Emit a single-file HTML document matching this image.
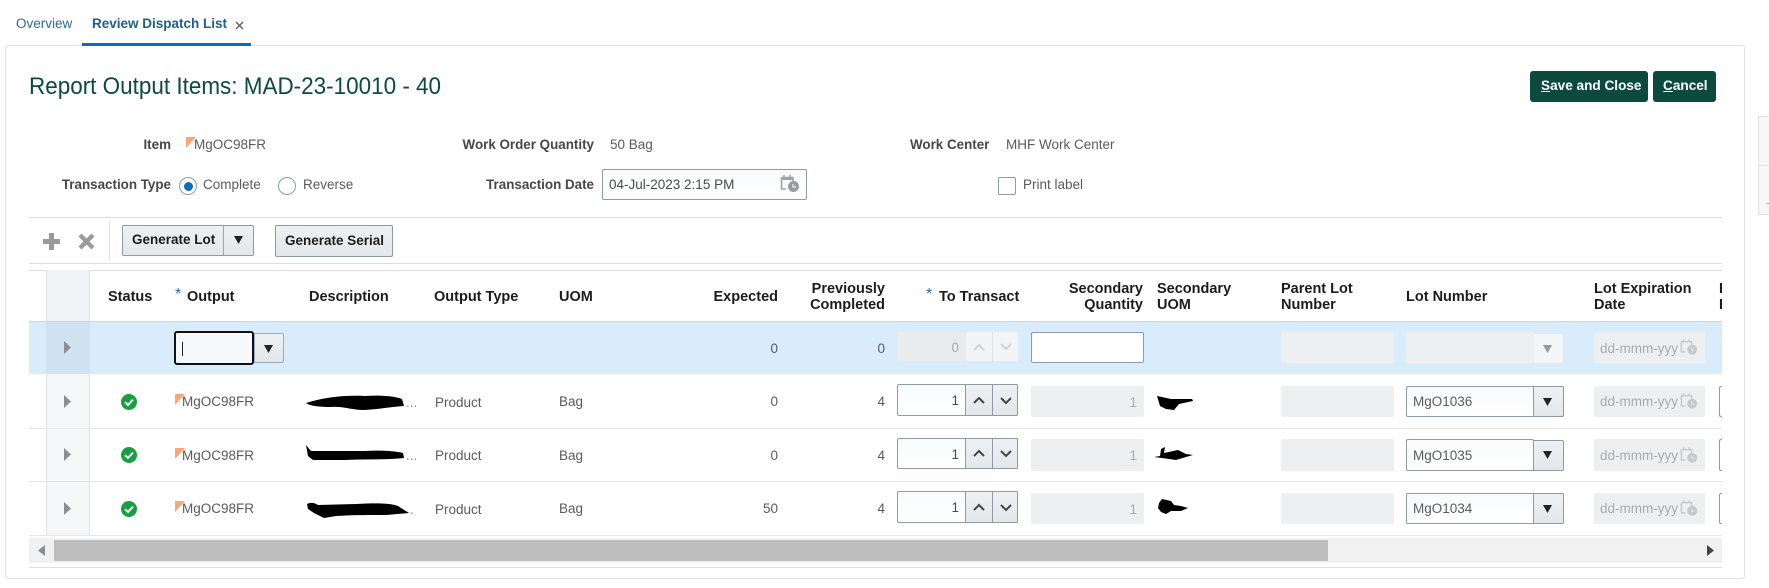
<!DOCTYPE html>
<html>
<head>
<meta charset="utf-8">
<style>
html,body{margin:0;padding:0;background:#fff;}
body{width:1769px;height:588px;overflow:hidden;position:relative;font-family:"Liberation Sans",sans-serif;font-size:13.5px;color:#5a5a5a;}
div,svg,span.a{position:absolute;box-sizing:border-box;}
.t{position:absolute;white-space:nowrap;line-height:16px;height:16px;margin-top:1px;}
.r{text-align:right;}
.b{font-weight:bold;color:#474747;font-size:13.4px;}
.h{font-weight:bold;color:#1c1c1c;font-size:14.5px;margin-top:1px;}
.dis{background:#eeeff0;border-radius:2px;}
.inp{background:linear-gradient(#f8fbfd,#fff);border:1px solid #8f9ba4;border-radius:2px;}
.btn{background:linear-gradient(#eef1f4,#e3e7ea);border:1px solid #8f9ba4;border-radius:2px;}
.g{color:#aaa;}
</style>
</head>
<body>
<!-- tabs -->
<div class="t" style="left:16px;top:15px;color:#2d6a8f;font-size:13.5px;">Overview</div>
<div class="t" style="left:92px;top:15px;color:#1d5f8a;font-weight:bold;font-size:13.5px;">Review Dispatch List</div>
<svg style="left:235px;top:21px" width="9" height="9" viewBox="0 0 9 9"><path d="M1 1L8 8M8 1L1 8" stroke="#666" stroke-width="1.5"/></svg>
<!-- panel -->
<div style="left:5px;top:45px;width:1740px;height:534px;border:1px solid #dfe1e3;border-radius:3px;"></div>
<div style="left:82px;top:43px;width:169px;height:3px;background:#0f6cbd;"></div>
<!-- side tabs -->
<div style="left:1758px;top:116px;width:14px;height:99px;background:#f7f7f7;border:1px solid #e2e2e2;"></div>
<div style="left:1758px;top:165px;width:11px;height:1px;background:#e2e2e2;"></div>
<div style="left:1767px;top:203px;width:2px;height:1px;background:#999;"></div>
<!-- title -->
<div class="t" style="left:29px;top:72px;height:28px;line-height:28px;font-size:24px;color:#0d4a40;transform:scaleX(.936);transform-origin:0 50%;">Report Output Items: MAD-23-10010 - 40</div>
<div style="left:1530px;top:71px;width:118px;height:31px;background:#0c4a3f;border-radius:3px;"></div>
<div class="t" style="left:1541px;top:77px;color:#fff;font-weight:bold;font-size:13.6px;"><u>S</u>ave and Close</div>
<div style="left:1653px;top:71px;width:63px;height:31px;background:#0c4a3f;border-radius:3px;"></div>
<div class="t" style="left:1663px;top:77px;color:#fff;font-weight:bold;font-size:13.6px;"><u>C</u>ancel</div>
<!-- form -->
<div class="t b r" style="left:71px;width:100px;top:136px;">Item</div>
<svg style="left:186px;top:137px" width="10" height="11"><path d="M0 0H10L0 11Z" fill="#f6a878"/></svg>
<div class="t" style="left:194px;top:136px;">MgOC98FR</div>
<div class="t b r" style="left:394px;width:200px;top:136px;">Work Order Quantity</div>
<div class="t" style="left:610px;top:136px;">50 Bag</div>
<div class="t b" style="left:910px;top:136px;">Work Center</div>
<div class="t" style="left:1006px;top:136px;">MHF Work Center</div>
<div class="t b r" style="left:0;width:171px;top:176px;">Transaction Type</div>
<div style="left:179px;top:177px;width:18px;height:18px;border:1px solid #8f9ba4;border-radius:50%;background:#fff;"></div>
<div style="left:183.5px;top:181.5px;width:9px;height:9px;border-radius:50%;background:#0f6cbd;"></div>
<div class="t" style="left:203px;top:176px;">Complete</div>
<div style="left:278px;top:177px;width:18px;height:18px;border:1px solid #8f9ba4;border-radius:50%;background:#fff;"></div>
<div class="t" style="left:303px;top:176px;">Reverse</div>
<div class="t b r" style="left:394px;width:200px;top:176px;">Transaction Date</div>
<div class="inp" style="left:602px;top:169px;width:205px;height:31px;"></div>
<div class="t" style="left:609px;top:176px;color:#4a4a4a;">04-Jul-2023 2:15 PM</div>
<svg style="left:780px;top:174px" width="20" height="19" viewBox="0 0 20 19"><path d="M1.5 3.5H13V7M1.5 3.5V15H6" fill="none" stroke="#a0a4a8" stroke-width="1.6"/><path d="M1.5 3.5H13V6H1.5Z" fill="#a0a4a8"/><path d="M4 1V4M10 1V4" stroke="#a0a4a8" stroke-width="1.6"/><circle cx="13.5" cy="12.5" r="5.5" fill="#979c9f"/><path d="M13 10V13H16" stroke="#fff" stroke-width="1" fill="none"/></svg>
<div style="left:998px;top:177px;width:18px;height:18px;border:1px solid #8f9ba4;border-radius:2px;background:#fff;"></div>
<div class="t" style="left:1023px;top:176px;">Print label</div>
<!-- toolbar lines -->
<div style="left:29px;top:217px;width:1693px;height:1px;background:#dedede;"></div>
<div style="left:29px;top:263px;width:1693px;height:1px;background:#dedede;"></div>
<div style="left:29px;top:270px;width:1693px;height:1px;background:#dedede;"></div>
<div style="left:109px;top:222px;width:1px;height:38px;background:#e3e3e3;"></div>
<svg style="left:43px;top:233px" width="17" height="17"><path d="M6 0H11V6H17V11H11V17H6V11H0V6H6Z" fill="#9a9a9a"/></svg>
<svg style="left:78px;top:233px" width="17" height="17"><path d="M2 2L15 15M15 2L2 15" stroke="#9a9a9a" stroke-width="4.4"/></svg>
<div class="btn" style="left:122px;top:225px;width:132px;height:31px;"></div>
<div style="left:223px;top:226px;width:1px;height:29px;background:#9aa5ae;"></div>
<div class="t" style="left:132px;top:231px;color:#1c1c1c;font-weight:bold;">Generate Lot</div>
<svg style="left:234px;top:236px" width="9" height="8"><path d="M0 0H9L4.5 8Z" fill="#222"/></svg>
<div class="btn" style="left:275px;top:225px;width:118px;height:32px;"></div>
<div class="t" style="left:285px;top:232px;color:#1c1c1c;font-weight:bold;">Generate Serial</div>
<!-- table backgrounds -->
<div style="left:29px;top:321px;width:1693px;height:53px;background:#d8ecfb;border-top:1px solid #c6d8e6;"></div>
<div style="left:46px;top:270px;width:44px;height:51px;background:#f1f3f6;border-left:1px solid #dfe3e7;border-right:1px solid #dfe3e7;"></div>
<div style="left:46px;top:321px;width:44px;height:53px;background:#c9dcec;opacity:.55;"></div>
<div style="left:46px;top:374px;width:44px;height:162px;background:#f5f6f8;border-left:1px solid #dfe3e7;border-right:1px solid #dfe3e7;"></div>
<div style="left:29px;top:428px;width:1693px;height:1px;background:#e6e6e6;"></div>
<div style="left:29px;top:481px;width:1693px;height:1px;background:#e6e6e6;"></div>
<div style="left:29px;top:535px;width:1693px;height:1px;background:#e6e6e6;"></div>
<!-- expanders -->
<svg style="left:64px;top:341px" width="8" height="13"><path d="M0 0L7 6.5L0 13Z" fill="#8b8f93"/></svg>
<svg style="left:64px;top:395px" width="8" height="13"><path d="M0 0L7 6.5L0 13Z" fill="#8b8f93"/></svg>
<svg style="left:64px;top:448px" width="8" height="13"><path d="M0 0L7 6.5L0 13Z" fill="#8b8f93"/></svg>
<svg style="left:64px;top:502px" width="8" height="13"><path d="M0 0L7 6.5L0 13Z" fill="#8b8f93"/></svg>
<!-- headers -->
<div class="t h" style="left:108px;top:288px;">Status</div>
<div class="t" style="left:175px;top:286px;color:#1f6fa8;font-size:16px;">*</div>
<div class="t h" style="left:187px;top:288px;">Output</div>
<div class="t h" style="left:309px;top:288px;">Description</div>
<div class="t h" style="left:434px;top:288px;">Output Type</div>
<div class="t h" style="left:559px;top:288px;">UOM</div>
<div class="t h r" style="left:678px;width:100px;top:288px;">Expected</div>
<div class="t h r" style="left:785px;width:100px;top:280px;">Previously</div>
<div class="t h r" style="left:785px;width:100px;top:296px;">Completed</div>
<div class="t" style="left:926px;top:286px;color:#1f6fa8;font-size:16px;">*</div>
<div class="t h" style="left:939px;top:288px;">To Transact</div>
<div class="t h r" style="left:1043px;width:100px;top:280px;">Secondary</div>
<div class="t h r" style="left:1043px;width:100px;top:296px;">Quantity</div>
<div class="t h" style="left:1157px;top:280px;">Secondary</div>
<div class="t h" style="left:1157px;top:296px;">UOM</div>
<div class="t h" style="left:1281px;top:280px;">Parent Lot</div>
<div class="t h" style="left:1281px;top:296px;">Number</div>
<div class="t h" style="left:1406px;top:288px;">Lot Number</div>
<div class="t h" style="left:1594px;top:280px;">Lot Expiration</div>
<div class="t h" style="left:1594px;top:296px;">Date</div>
<div style="left:1719px;top:280px;width:3px;height:33px;overflow:hidden;"><div class="t h" style="left:0;top:0;">L</div><div class="t h" style="left:0;top:16px;">D</div></div>
<!-- row 1 -->
<div style="left:254px;top:333px;width:30px;height:30px;background:linear-gradient(#eef1f4,#e3e7ea);border:1px solid #a0acb5;border-radius:0 2px 2px 0;"></div>
<div style="left:174px;top:331px;width:80px;height:34px;background:#f6fafd;border:2px solid #111;border-radius:3px;"></div>
<div style="left:182px;top:342px;width:1px;height:14px;background:#222;"></div>
<svg style="left:264px;top:345px" width="9" height="8"><path d="M0 0H9L4.5 8Z" fill="#222"/></svg>
<div class="t r" style="left:678px;width:100px;top:340px;">0</div>
<div class="t r" style="left:785px;width:100px;top:340px;">0</div>
<div style="left:897px;top:332px;width:69px;height:29px;background:#e9ebec;border-radius:2px;"></div>
<div class="t r g" style="left:900px;width:59px;top:339px;">0</div>
<div style="left:966px;top:332px;width:52px;height:29px;background:#f2f4f6;border-radius:2px;"></div>
<div style="left:992px;top:332px;width:1px;height:29px;background:#dfe3e6;"></div>
<svg style="left:973px;top:343px" width="12" height="8"><path d="M1 7L6 2L11 7" fill="none" stroke="#cfd3d6" stroke-width="2"/></svg>
<svg style="left:1000px;top:343px" width="12" height="8"><path d="M1 1L6 6L11 1" fill="none" stroke="#cfd3d6" stroke-width="2"/></svg>
<div style="left:1031px;top:332px;width:113px;height:31px;background:#fff;border:1px solid #8f9ba4;border-radius:2px;"></div>
<div class="dis" style="left:1281px;top:332px;width:113px;height:31px;"></div>
<div class="dis" style="left:1406px;top:332px;width:128px;height:31px;"></div>
<div style="left:1534px;top:334px;width:29px;height:29px;background:#f3f5f7;border-radius:0 2px 2px 0;"></div>
<svg style="left:1543px;top:345px" width="9" height="8"><path d="M0 0H9L4.5 8Z" fill="#999"/></svg>
<div class="dis" style="left:1594px;top:332px;width:111px;height:31px;"></div>
<div class="t g" style="left:1600px;top:340px;">dd-mmm-yyy</div>
<svg style="left:1680px;top:338px" width="18" height="18" viewBox="0 0 20 19"><path d="M1.5 3.5H13V7M1.5 3.5V15H6" fill="none" stroke="#c6c8ca" stroke-width="1.6"/><path d="M4 1V4M10 1V4" stroke="#c6c8ca" stroke-width="1.6"/><circle cx="13.5" cy="12.5" r="5.5" fill="#c6c8ca"/><path d="M13 10V13H16" stroke="#eee" stroke-width="1" fill="none"/></svg>

<!-- row 2 -->
<svg style="left:121px;top:394px" width="16" height="16" viewBox="0 0 16 16"><circle cx="8" cy="8" r="8" fill="#17a043"/><path d="M4 8.2L7 11L12 5.5" fill="none" stroke="#fff" stroke-width="2"/></svg>
<svg style="left:175px;top:394px" width="10" height="11"><path d="M0 0H10L0 11Z" fill="#f6a878"/></svg>
<div class="t" style="left:182px;top:393px;">MgOC98FR</div>
<svg style="left:305px;top:394px" width="100" height="18"><path d="M1 9C20 3 40 1 60 2C75 1 90 2 97 5L99 12C85 13 75 15 60 16C45 16 40 12 25 13C15 13 5 12 1 9Z" fill="#000"/></svg>
<div class="t g" style="left:406px;top:394px;color:#888;">...</div>
<div class="t" style="left:435px;top:394px;">Product</div>
<div class="t" style="left:559px;top:393px;">Bag</div>
<div class="t r" style="left:678px;width:100px;top:393px;">0</div>
<div class="t r" style="left:785px;width:100px;top:393px;">4</div>
<div class="inp" style="left:897px;top:384px;width:121px;height:32px;"></div>
<div class="t r" style="left:900px;width:59px;top:392px;color:#4a4a4a;">1</div>
<div class="btn" style="left:965px;top:384px;width:28px;height:32px;border-radius:0;"></div>
<div class="btn" style="left:992px;top:384px;width:26px;height:32px;border-radius:0 2px 2px 0;"></div>
<svg style="left:973px;top:396px" width="12" height="8"><path d="M1 7L6 2L11 7" fill="none" stroke="#444" stroke-width="2"/></svg>
<svg style="left:1000px;top:397px" width="12" height="8"><path d="M1 1L6 6L11 1" fill="none" stroke="#444" stroke-width="2"/></svg>
<div class="dis" style="left:1031px;top:386px;width:113px;height:31px;"></div>
<div class="t r g" style="left:1040px;width:97px;top:394px;">1</div>
<svg style="left:1157px;top:396px" width="36" height="15"><path d="M0 0L14 3L35 3L36 5L22 8L17 14L9 13L3 10Z" fill="#000"/></svg>
<div class="dis" style="left:1281px;top:386px;width:113px;height:31px;"></div>
<div class="inp" style="left:1406px;top:386px;width:158px;height:31px;"></div>
<div class="btn" style="left:1533px;top:386px;width:31px;height:31px;border-radius:0 2px 2px 0;"></div>
<div class="t" style="left:1413px;top:393px;">MgO1036</div>
<svg style="left:1543px;top:398px" width="9" height="8"><path d="M0 0H9L4.5 8Z" fill="#222"/></svg>
<div class="dis" style="left:1594px;top:386px;width:111px;height:31px;"></div>
<div class="t g" style="left:1600px;top:393px;">dd-mmm-yyy</div>
<svg style="left:1680px;top:392px" width="18" height="18" viewBox="0 0 20 19"><path d="M1.5 3.5H13V7M1.5 3.5V15H6" fill="none" stroke="#c6c8ca" stroke-width="1.6"/><path d="M4 1V4M10 1V4" stroke="#c6c8ca" stroke-width="1.6"/><circle cx="13.5" cy="12.5" r="5.5" fill="#c6c8ca"/><path d="M13 10V13H16" stroke="#eee" stroke-width="1" fill="none"/></svg>
<div style="left:1719px;top:386px;width:3px;height:31px;border:1px solid #8f9ba4;border-right:0;border-radius:2px 0 0 2px;"></div>

<!-- row 3 -->
<svg style="left:121px;top:447px" width="16" height="16" viewBox="0 0 16 16"><circle cx="8" cy="8" r="8" fill="#17a043"/><path d="M4 8.2L7 11L12 5.5" fill="none" stroke="#fff" stroke-width="2"/></svg>
<svg style="left:175px;top:448px" width="10" height="11"><path d="M0 0H10L0 11Z" fill="#f6a878"/></svg>
<div class="t" style="left:182px;top:447px;">MgOC98FR</div>
<svg style="left:305px;top:445px" width="100" height="16"><path d="M1 0L6 6C25 6 45 6 60 6C75 5 90 6 98 8L99 13C80 15 60 14 40 15L8 15L3 11Z" fill="#000"/></svg>
<div class="t g" style="left:406px;top:447px;color:#888;">...</div>
<div class="t" style="left:435px;top:447px;">Product</div>
<div class="t" style="left:559px;top:447px;">Bag</div>
<div class="t r" style="left:678px;width:100px;top:447px;">0</div>
<div class="t r" style="left:785px;width:100px;top:447px;">4</div>
<div class="inp" style="left:897px;top:438px;width:121px;height:31px;"></div>
<div class="t r" style="left:900px;width:59px;top:446px;color:#4a4a4a;">1</div>
<div class="btn" style="left:965px;top:438px;width:28px;height:31px;border-radius:0;"></div>
<div class="btn" style="left:992px;top:438px;width:26px;height:31px;border-radius:0 2px 2px 0;"></div>
<svg style="left:973px;top:449px" width="12" height="8"><path d="M1 7L6 2L11 7" fill="none" stroke="#444" stroke-width="2"/></svg>
<svg style="left:1000px;top:450px" width="12" height="8"><path d="M1 1L6 6L11 1" fill="none" stroke="#444" stroke-width="2"/></svg>
<div class="dis" style="left:1031px;top:439px;width:113px;height:32px;"></div>
<div class="t r g" style="left:1040px;width:97px;top:447px;">1</div>
<svg style="left:1154px;top:447px" width="40" height="13"><path d="M0 10L6 9L7 2L11 0L10 6L24 3L32 7L39 8L32 10L22 13L8 11Z" fill="#000"/></svg>
<div class="dis" style="left:1281px;top:439px;width:113px;height:32px;"></div>
<div class="inp" style="left:1406px;top:439px;width:128px;height:32px;"></div>
<div class="btn" style="left:1533px;top:440px;width:31px;height:31px;border-radius:0 2px 2px 0;"></div>
<div class="t" style="left:1413px;top:447px;">MgO1035</div>
<svg style="left:1543px;top:451px" width="9" height="8"><path d="M0 0H9L4.5 8Z" fill="#222"/></svg>
<div class="dis" style="left:1594px;top:439px;width:111px;height:32px;"></div>
<div class="t g" style="left:1600px;top:447px;">dd-mmm-yyy</div>
<svg style="left:1680px;top:446px" width="18" height="18" viewBox="0 0 20 19"><path d="M1.5 3.5H13V7M1.5 3.5V15H6" fill="none" stroke="#c6c8ca" stroke-width="1.6"/><path d="M4 1V4M10 1V4" stroke="#c6c8ca" stroke-width="1.6"/><circle cx="13.5" cy="12.5" r="5.5" fill="#c6c8ca"/><path d="M13 10V13H16" stroke="#eee" stroke-width="1" fill="none"/></svg>
<div style="left:1719px;top:439px;width:3px;height:32px;border:1px solid #8f9ba4;border-right:0;border-radius:2px 0 0 2px;"></div>

<!-- row 4 -->
<svg style="left:121px;top:501px" width="16" height="16" viewBox="0 0 16 16"><circle cx="8" cy="8" r="8" fill="#17a043"/><path d="M4 8.2L7 11L12 5.5" fill="none" stroke="#fff" stroke-width="2"/></svg>
<svg style="left:175px;top:501px" width="10" height="11"><path d="M0 0H10L0 11Z" fill="#f6a878"/></svg>
<div class="t" style="left:182px;top:500px;">MgOC98FR</div>
<svg style="left:306px;top:502px" width="104" height="16"><path d="M1 2C5 0 9 1 12 3L50 2C70 1 85 1 92 4L103 11L80 13C60 13 45 13 30 14L18 16L8 11L2 7Z" fill="#000"/></svg>
<div class="t g" style="left:410px;top:501px;color:#888;">.</div>
<div class="t" style="left:435px;top:501px;">Product</div>
<div class="t" style="left:559px;top:500px;">Bag</div>
<div class="t r" style="left:678px;width:100px;top:500px;">50</div>
<div class="t r" style="left:785px;width:100px;top:500px;">4</div>
<div class="inp" style="left:897px;top:491px;width:121px;height:32px;"></div>
<div class="t r" style="left:900px;width:59px;top:499px;color:#4a4a4a;">1</div>
<div class="btn" style="left:965px;top:491px;width:28px;height:32px;border-radius:0;"></div>
<div class="btn" style="left:992px;top:491px;width:26px;height:32px;border-radius:0 2px 2px 0;"></div>
<svg style="left:973px;top:503px" width="12" height="8"><path d="M1 7L6 2L11 7" fill="none" stroke="#444" stroke-width="2"/></svg>
<svg style="left:1000px;top:504px" width="12" height="8"><path d="M1 1L6 6L11 1" fill="none" stroke="#444" stroke-width="2"/></svg>
<div class="dis" style="left:1031px;top:493px;width:113px;height:31px;"></div>
<div class="t r g" style="left:1040px;width:97px;top:501px;">1</div>
<svg style="left:1157px;top:499px" width="32" height="16"><path d="M2 4L5 0L14 2L17 6L24 7L31 9L24 12L14 12L9 15L4 13L1 9Z" fill="#000"/></svg>
<div class="dis" style="left:1281px;top:493px;width:113px;height:31px;"></div>
<div class="inp" style="left:1406px;top:493px;width:158px;height:31px;"></div>
<div class="btn" style="left:1533px;top:493px;width:31px;height:31px;border-radius:0 2px 2px 0;"></div>
<div class="t" style="left:1413px;top:500px;">MgO1034</div>
<svg style="left:1543px;top:505px" width="9" height="8"><path d="M0 0H9L4.5 8Z" fill="#222"/></svg>
<div class="dis" style="left:1594px;top:493px;width:111px;height:31px;"></div>
<div class="t g" style="left:1600px;top:500px;">dd-mmm-yyy</div>
<svg style="left:1680px;top:499px" width="18" height="18" viewBox="0 0 20 19"><path d="M1.5 3.5H13V7M1.5 3.5V15H6" fill="none" stroke="#c6c8ca" stroke-width="1.6"/><path d="M4 1V4M10 1V4" stroke="#c6c8ca" stroke-width="1.6"/><circle cx="13.5" cy="12.5" r="5.5" fill="#c6c8ca"/><path d="M13 10V13H16" stroke="#eee" stroke-width="1" fill="none"/></svg>
<div style="left:1719px;top:493px;width:3px;height:31px;border:1px solid #8f9ba4;border-right:0;border-radius:2px 0 0 2px;"></div>

<!-- scrollbar -->
<div style="left:29px;top:538px;width:1693px;height:25px;background:#f1f1f1;"></div>
<div style="left:54px;top:540px;width:1274px;height:21px;background:#bdbdbd;"></div>
<svg style="left:38px;top:545px" width="7" height="11"><path d="M7 0L0 5.5L7 11Z" fill="#8b8f93"/></svg>
<svg style="left:1707px;top:545px" width="7" height="11"><path d="M0 0L7 5.5L0 11Z" fill="#444"/></svg>
<div style="left:29px;top:567px;width:1693px;height:1px;background:#dedede;"></div>
</body>
</html>
